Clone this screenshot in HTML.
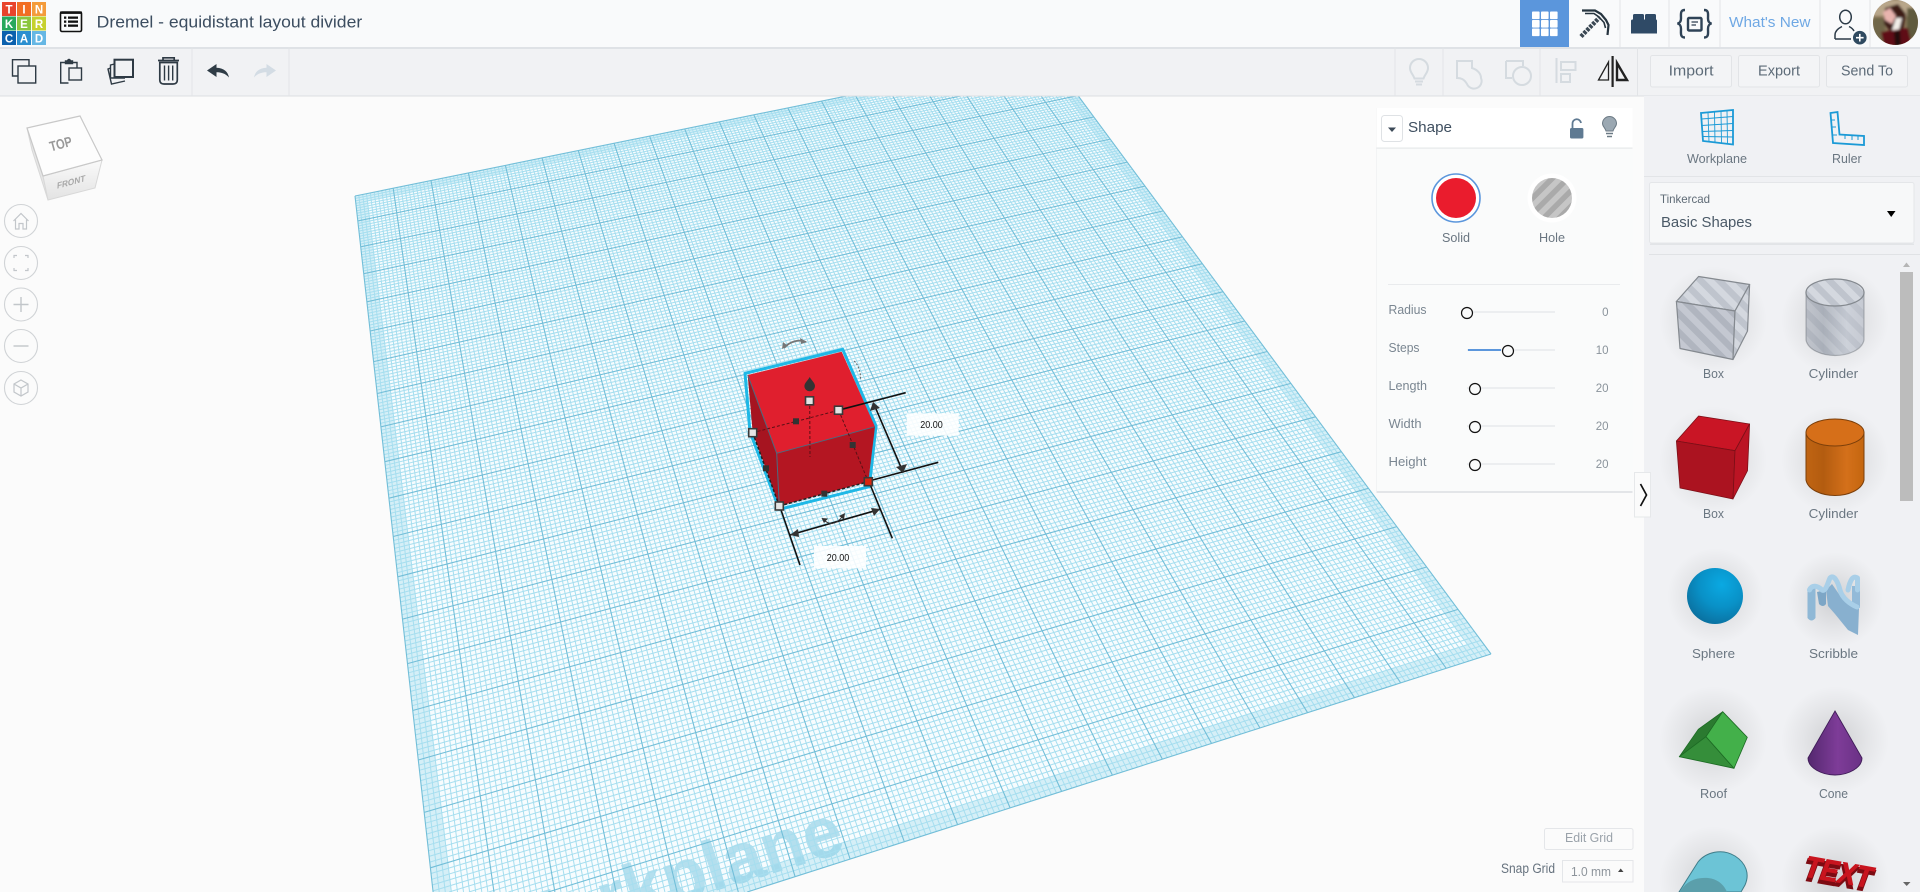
<!DOCTYPE html>
<html><head><meta charset="utf-8"><title>Dremel - equidistant layout divider</title>
<style>
html,body{margin:0;padding:0;background:#fbfbfb;overflow:hidden;width:1920px;height:892px}
svg{display:block;font-family:"Liberation Sans",sans-serif}
.lb{fill:#6a7681;font-size:13px}
.sl{fill:#7a8691;font-size:13px}
.val{fill:#8a939b;font-size:11.5px;text-anchor:end}
.btn{fill:#5d6b78;font-size:15px}
.ic{fill:none;stroke:#2e3a44;stroke-width:1.4}
.dis{fill:none;stroke:#d5dbe0;stroke-width:2}
.sep{stroke:#e2e4e7;stroke-width:1}
</style></head>
<body>
<svg xmlns="http://www.w3.org/2000/svg" width="1920" height="892" viewBox="0 0 1920 892">
<defs>
<pattern id="st" width="13" height="13" patternUnits="userSpaceOnUse" patternTransform="rotate(-45)"><rect width="13" height="13" fill="#c4c8d1"/><rect width="6.5" height="13" fill="#b0b5bf"/></pattern>
<pattern id="st2" width="13" height="13" patternUnits="userSpaceOnUse" patternTransform="rotate(-45)"><rect width="13" height="13" fill="#d4d8df"/><rect width="6.5" height="13" fill="#bfc4cd"/></pattern>
<pattern id="st3" width="11" height="11" patternUnits="userSpaceOnUse" patternTransform="rotate(45)"><rect width="11" height="11" fill="#c6c6c6"/><rect width="5.5" height="11" fill="#aaaaaa"/></pattern>
<linearGradient id="org" x1="0" x2="1" y1="0" y2="0"><stop offset="0" stop-color="#c06412"/><stop offset=".3" stop-color="#b35c10"/><stop offset=".7" stop-color="#d4701a"/><stop offset="1" stop-color="#c4660f"/></linearGradient>
<linearGradient id="gcyl" x1="0" x2="1" y1="0" y2="0"><stop offset="0" stop-color="#a9adb6"/><stop offset=".3" stop-color="#8f95a0"/><stop offset=".7" stop-color="#c6cbd4"/><stop offset="1" stop-color="#b6bac4"/></linearGradient>
<linearGradient id="pur" x1="0" x2="1" y1="0" y2="0"><stop offset="0" stop-color="#54286f"/><stop offset=".55" stop-color="#7e3c98"/><stop offset="1" stop-color="#6a3185"/></linearGradient>
<radialGradient id="sph" cx=".62" cy=".3" r=".8"><stop offset="0" stop-color="#0aa9e2"/><stop offset=".5" stop-color="#0991c7"/><stop offset="1" stop-color="#0a6a98"/></radialGradient>
<radialGradient id="glow"><stop offset="0" stop-color="#000" stop-opacity=".14"/><stop offset=".6" stop-color="#000" stop-opacity=".05"/><stop offset="1" stop-color="#000" stop-opacity="0"/></radialGradient>
<radialGradient id="glowB1" gradientUnits="userSpaceOnUse" cx="1713" cy="880" r="54"><stop offset="0" stop-color="#000" stop-opacity=".14"/><stop offset=".6" stop-color="#000" stop-opacity=".05"/><stop offset="1" stop-color="#000" stop-opacity="0"/></radialGradient>
<radialGradient id="glowB2" gradientUnits="userSpaceOnUse" cx="1835" cy="880" r="54"><stop offset="0" stop-color="#000" stop-opacity=".14"/><stop offset=".6" stop-color="#000" stop-opacity=".05"/><stop offset="1" stop-color="#000" stop-opacity="0"/></radialGradient>
<clipPath id="av"><circle cx="1895.5" cy="22.5" r="22.5"/></clipPath>
<filter id="bl"><feGaussianBlur stdDeviation="1.2"/></filter>
<linearGradient id="cubef" x1="0" x2="0" y1="0" y2="1"><stop offset="0" stop-color="#fafafa"/><stop offset="1" stop-color="#e3e3e3"/></linearGradient>
</defs>

<!-- workspace -->
<rect width="1920" height="892" fill="#fbfbfb"/>
<polygon points="355,196 1048,55 1491,654 747,892 433,892" fill="#f7fcfe"/>
<g transform="matrix(1,-0.30,0.33,1,848,851)"><text x="0" y="0" text-anchor="end" font-size="68" font-weight="700" fill="#b4dfee">Workplane</text></g>
<g id="grid"></g>

<!-- gizmo -->
<polygon points="745,373.3 842.7,349.3 876,426 869.3,486.7 779.3,509.3 750,432" fill="none" stroke="#1fb8e6" stroke-width="3" stroke-linejoin="round"/>
<polygon points="747.7,375 776.7,453.3 779.3,506 752.7,432.7" fill="#a61420"/>
<polygon points="747.7,375 841.7,351.7 875,426.7 776.7,453.3" fill="#e01f2e"/>
<polygon points="776.7,453.3 875,426.7 868.3,481.7 779.3,506" fill="#b41622"/>
<polyline points="747.7,375 776.7,453.3 875,426.7" fill="none" stroke="#4a6b80" stroke-width="1"/>
<line x1="776.7" y1="453.3" x2="779.3" y2="506" stroke="#4a6b80"/>
<g fill="none" stroke="#5a1016" stroke-width="1" stroke-dasharray="3 2">
<line x1="752.7" y1="432.7" x2="838.7" y2="410.3"/><line x1="809.7" y1="401" x2="810" y2="457"/><line x1="838.7" y1="410.3" x2="868.3" y2="481.7"/><line x1="779.3" y1="506" x2="868.3" y2="481.7" stroke="#222" stroke-width="1.5"/><line x1="752.7" y1="432.7" x2="779.3" y2="506" stroke="#222" stroke-width="1.5"/>
</g>
<g stroke="#111" stroke-width="1.6" fill="none">
<line x1="841.7" y1="409.3" x2="905.7" y2="392.7"/><line x1="872.7" y1="480" x2="938.3" y2="462.3"/>
<line x1="873.3" y1="402.7" x2="903.3" y2="472.7"/><line x1="781" y1="510" x2="800" y2="565"/><line x1="870.7" y1="486" x2="892.3" y2="538.3"/><line x1="790" y1="535" x2="880" y2="509.3"/>
</g>
<g fill="#333">
<polygon points="873,402 880,408 870,411"/><polygon points="903,473 896,467 907,464"/><polygon points="790,535 798,529 799,537"/><polygon points="880,509 871,508 874,516"/>
<rect x="793" y="418.3" width="6" height="6"/><rect x="849.7" y="442" width="6" height="6"/><rect x="821.3" y="490.7" width="6" height="6"/><rect x="763" y="465.3" width="6" height="6"/>
<path d="M809.7,377 C812,381 815,383 815,386 A5.3,5.3 0 0 1 804.4,386 C804.4,383 807.5,381 809.7,377Z"/>
<polygon points="821.5,518 828,518.5 824,523"/><polygon points="845,513 844,519.5 839,516"/>
</g>
<path d="M824,520 C829,525 836,525 842,517" fill="none" stroke="#333" stroke-width="1"/>
<path d="M784,348 C790,341 800,339 806,342" fill="none" stroke="#777" stroke-width="1.8"/>
<polygon points="782,349 783,342 788,346" fill="#777"/><polygon points="807,342 800,338 801,344" fill="#777"/>
<path d="M854,361 C858,364 861,372 860.5,380" fill="none" stroke="#666" stroke-width="1" stroke-dasharray="2 1.5"/>
<g fill="#e4e4e4" stroke="#3a3a3a" stroke-width="1.6">
<rect x="805.5" y="396.8" width="8" height="8"/><rect x="834.5" y="406.2" width="8" height="8"/><rect x="748.7" y="428.7" width="8" height="8"/><rect x="775.3" y="502" width="8" height="8"/>
<rect x="864.3" y="477.7" width="8" height="8" fill="#d8260f"/>
</g>
<rect x="906.7" y="413.3" width="52" height="22.4" fill="#fff" opacity=".88"/>
<text x="931.5" y="428" font-size="10" text-anchor="middle" fill="#111" textLength="22.5" lengthAdjust="spacingAndGlyphs">20.00</text>
<rect x="814" y="546" width="52" height="22.4" fill="#fff" opacity=".88"/>
<text x="838" y="561" font-size="10" text-anchor="middle" fill="#111" textLength="22.5" lengthAdjust="spacingAndGlyphs">20.00</text>

<!-- view cube -->
<polygon points="27,128 43,176 48,200 32,150" fill="#e6e6e6" stroke="#d8d8d8"/>
<polygon points="43,176 102,160 95,188 48,200" fill="url(#cubef)" stroke="#d8d8d8"/>
<polygon points="27,128 80,116 102,160 43,176" fill="#fdfdfd" stroke="#c8c8c8" stroke-width="1.2"/>
<text transform="translate(62,148.5) rotate(-15) scale(.8,1)" font-size="14" font-weight="700" fill="#999" text-anchor="middle">TOP</text>
<text transform="translate(71,185) rotate(-15) skewX(-18)" font-size="8.5" font-weight="700" fill="#a8a8a8" text-anchor="middle">FRONT</text>
<g fill="#fbfbfb" stroke="#d0d3d6" stroke-width="1.1">
<circle cx="21" cy="221" r="16.5"/><circle cx="21" cy="263" r="16.5"/><circle cx="21" cy="304.5" r="16.5"/><circle cx="21" cy="346" r="16.5"/><circle cx="21" cy="388" r="16.5"/>
</g>
<g fill="none" stroke="#c2c6ca" stroke-width="1.2">
<path d="M13.5,221 L21,213.5 L28.5,221 M15.5,219.5 V229 H19 V223.5 H23 V229 H26.5 V219.5"/>
<path d="M14,258 V255.5 H17 M25,255.5 H28 V258 M28,268 V270.5 H25 M17,270.5 H14 V268"/>
<path d="M21,297 V312 M13.5,304.5 H28.5" stroke-width="1.4"/>
<path d="M13.5,346 H28.5" stroke-width="1.4"/>
<path d="M21,380 L28,384 V392 L21,396 L14,392 V384 Z M14,384 L21,388 L28,384 M21,388 V396"/>
</g>

<!-- top bar -->
<rect y="47" width="1920" height="49" fill="#f1f2f4"/>
<rect y="95.5" width="1920" height="1" fill="#dcdfe2"/>
<rect y="47" width="1920" height="2" fill="#dfe2e6"/>
<rect width="1920" height="47" fill="#f9fafb"/>
<g font-weight="700" font-size="11.5" fill="#fff" text-anchor="middle">
<rect x="2" y="2" width="14" height="14" fill="#e8432b"/><text x="9" y="13.5">T</text>
<rect x="17" y="2" width="14" height="14" fill="#f26e23"/><text x="24" y="13.5">I</text>
<rect x="32" y="2" width="14" height="14" fill="#f49b3b"/><text x="39" y="13.5">N</text>
<rect x="2" y="16.5" width="14" height="14" fill="#27a85d"/><text x="9" y="28">K</text>
<rect x="17" y="16.5" width="14" height="14" fill="#8cc63f"/><text x="24" y="28">E</text>
<rect x="32" y="16.5" width="14" height="14" fill="#c6d12f"/><text x="39" y="28">R</text>
<rect x="2" y="31" width="14" height="14" fill="#0b61ae"/><text x="9" y="42.5">C</text>
<rect x="17" y="31" width="14" height="14" fill="#2b8fd0"/><text x="24" y="42.5">A</text>
<rect x="32" y="31" width="14" height="14" fill="#66b7e4"/><text x="39" y="42.5">D</text>
</g>
<rect x="60.5" y="12" width="21" height="19.5" rx="1.5" fill="none" stroke="#111" stroke-width="1.6"/>
<rect x="60" y="11.5" width="22" height="2.4" fill="#111"/>
<g fill="#111"><rect x="64" y="16.5" width="2.3" height="2.3"/><rect x="64" y="20.5" width="2.3" height="2.3"/><rect x="64" y="24.5" width="2.3" height="2.3"/><rect x="68" y="16.5" width="10" height="2.3"/><rect x="68" y="20.5" width="10" height="2.3"/><rect x="68" y="24.5" width="10" height="2.3"/></g>
<text x="96.7" y="27.5" font-size="16.5" fill="#3c4d60" textLength="265.5" lengthAdjust="spacingAndGlyphs">Dremel - equidistant layout divider</text>

<rect x="1520" y="0" width="49" height="47" fill="#5b96dc"/>
<g fill="#fff"><rect x="1532" y="11.5" width="7.6" height="7.6" rx=".8"/><rect x="1541" y="11.5" width="7.6" height="7.6" rx=".8"/><rect x="1550" y="11.5" width="7.6" height="7.6" rx=".8"/><rect x="1532" y="20" width="7.6" height="7.6" rx=".8"/><rect x="1541" y="20" width="7.6" height="7.6" rx=".8"/><rect x="1550" y="20" width="7.6" height="7.6" rx=".8"/><rect x="1532" y="28.5" width="7.6" height="7.6" rx=".8"/><rect x="1541" y="28.5" width="7.6" height="7.6" rx=".8"/><rect x="1550" y="28.5" width="7.6" height="7.6" rx=".8"/></g>
<!-- pickaxe -->
<path d="M1582,10.5 H1595 L1601,14 L1606,20 L1608.5,25 L1607.5,35" fill="none" stroke="#26343f" stroke-width="2.2"/>
<path d="M1585,13.5 H1594 L1599,17 L1604,22.5 L1605.5,28" fill="none" stroke="#26343f" stroke-width="1.6"/>
<path d="M1581,36.5 L1599,18" fill="none" stroke="#3b4854" stroke-width="4.4" stroke-dasharray="3 1.2"/>
<line x1="1620" y1="0" x2="1620" y2="47" class="sep"/><line x1="1669" y1="0" x2="1669" y2="47" class="sep"/><line x1="1720" y1="0" x2="1720" y2="47" class="sep"/><line x1="1820" y1="0" x2="1820" y2="47" class="sep"/><line x1="1870" y1="0" x2="1870" y2="47" class="sep"/>
<path d="M1631,21 Q1631,19.5 1632.5,19.5 H1633 V15.5 Q1633,14 1634.5,14 H1642.5 Q1644,14 1644,15.5 V19.5 H1645 V15.5 Q1645,14 1646.5,14 H1654.5 Q1656,14 1656,15.5 V19.5 Q1657,19.5 1657,21 V33.5 H1631Z" fill="#2f4a66"/>
<g fill="none" stroke="#2f4357" stroke-width="2.4"><path d="M1685,10 C1680,10 1681,14 1681,18.5 C1681,22 1679.5,23 1677.5,23.5 C1679.5,24 1681,25 1681,29 C1681,33 1680,37.5 1685,37.5"/><path d="M1704,10 C1709,10 1708,14 1708,18.5 C1708,22 1709.5,23 1711.5,23.5 C1709.5,24 1708,25 1708,29 C1708,33 1709,37.5 1704,37.5"/><rect x="1688" y="18" width="13.5" height="12.5" rx="1"/></g>
<path d="M1691.5,22 H1698 M1691.5,25 H1696" stroke="#2f3f4f" stroke-width="1.2" fill="none"/>
<text x="1729" y="27" font-size="15" fill="#6fa8e4" textLength="81.5" lengthAdjust="spacingAndGlyphs">What's New</text>
<g fill="none" stroke="#2c3b48" stroke-width="1.5"><ellipse cx="1845.5" cy="17" rx="5.8" ry="6.8"/><path d="M1835,39 V35 C1835,30 1840,27.5 1842,26.5 M1849,26.5 C1851,27.5 1853,29 1854,31 M1835,39 H1851"/></g>
<circle cx="1859.8" cy="37.7" r="6.8" fill="#2f4a60"/><path d="M1856,37.7 H1863.6 M1859.8,33.9 V41.5" stroke="#fff" stroke-width="1.6"/>
<g clip-path="url(#av)">
<rect x="1873" y="0" width="45" height="45" fill="#8a7658"/>
<g filter="url(#bl)">
<rect x="1873" y="0" width="45" height="16" fill="#b8a68a"/>
<rect x="1873" y="18" width="12" height="27" fill="#70664a"/>
<rect x="1907" y="8" width="12" height="30" fill="#5e5a3e"/>
<path d="M1885,8 L1898,4 L1906,14 L1903,30 L1893,34 L1884,24Z" fill="#3d1a18"/>
<path d="M1883,12 L1890,8 L1896,16 L1892,24 L1885,20Z" fill="#e8b4ae"/>
<path d="M1896,18 L1902,18 L1898,34 L1892,30Z" fill="#f2eee8"/>
<path d="M1881,32 L1908,28 L1912,46 L1884,46Z" fill="#5e0f16"/>
<path d="M1894,32 L1900,30 L1901,46 L1895,46Z" fill="#240c0e"/>
</g></g>

<!-- toolbar icons -->
<g class="ic">
<path d="M18,76 H12.5 V59.7 H29 V66"/><rect x="18" y="66" width="17.7" height="17" fill="#f1f2f4"/>
<path d="M65,62.5 H60.7 V83 H68.5 M72.5,62.5 H77 V68"/><path d="M65.5,63.5 V61 H67.5 A1.5,1.5 0 0 1 70.5,61 H72.5 V63.5Z" fill="#2e3a44" stroke="#2e3a44"/><rect x="69" y="68" width="12.5" height="12" fill="#f1f2f4"/>
<rect x="114.5" y="59.7" width="18.5" height="17.3" stroke-width="2"/><path d="M114.5,64 L110.5,65 V78 L125,78 M110.5,68 L108,69 L111.5,84 L125,81" />
<path d="M159.8,62.5 H177.3 V80 Q177.3,84 173,84 H164 Q159.8,84 159.8,80Z" stroke-width="1.7"/><path d="M158,60.5 H179 M163,60 V57.8 H174.2 V60" stroke-width="1.7"/><path d="M164.5,65.5 V80.5 M168.6,65.5 V80.5 M172.7,65.5 V80.5"/>
</g>
<path d="M207,70.5 L216.5,64 V67.8 C224,68 228,72 229,77.5 C225.5,73.5 221,72.3 216.5,72.3 V77Z" fill="#2f3c46"/>
<path d="M276,70.5 L266.5,64 V67.8 C259,68 255,72 254,77.5 C257.5,73.5 262,72.3 266.5,72.3 V77Z" fill="#d3dce4"/>
<line x1="192" y1="47" x2="192" y2="96" class="sep"/><line x1="289" y1="47" x2="289" y2="96" class="sep"/>
<line x1="1395" y1="47" x2="1395" y2="96" class="sep"/><line x1="1443" y1="47" x2="1443" y2="96" class="sep"/><line x1="1540" y1="47" x2="1540" y2="96" class="sep"/><line x1="1637.5" y1="47" x2="1637.5" y2="96" class="sep"/>
<g class="dis">
<path d="M1414.5,78.5 C1413,74 1410,72.5 1410,68 A9,9 0 0 1 1428,68 C1428,72.5 1425,74 1423.5,78.5Z M1415,81.5 H1423 M1416,84.5 H1422"/>
<path d="M1457,61 H1472 V68 C1478,70 1481,74 1481,78 A7,7 0 0 1 1467,84 C1464,79 1461,78 1457,78Z"/>
<path d="M1506,61 H1523 V66 M1506,61 V78 H1512"/><circle cx="1522" cy="76" r="9"/>
<path d="M1556.5,58 V83 M1561,62 H1575.5 V70 H1561Z M1561,74 H1570 V82 H1561Z"/>
</g>
<line x1="1612.6" y1="56" x2="1612.6" y2="87" stroke="#222" stroke-width="2.2"/>
<polygon points="1598.5,80 1608.5,62 1608.5,80" fill="none" stroke="#222" stroke-width="1.3"/>
<polygon points="1617,63 1627,80 1617,80" fill="none" stroke="#222" stroke-width="2.4"/>
<g fill="#f3f4f6" stroke="#e2e4e7"><rect x="1650.5" y="55.5" width="81" height="31.5" rx="2"/><rect x="1738.5" y="55.5" width="81" height="31.5" rx="2"/><rect x="1826.5" y="55.5" width="81" height="31.5" rx="2"/></g>
<text class="btn" x="1668.6" y="75.5" textLength="45" lengthAdjust="spacingAndGlyphs">Import</text>
<text class="btn" x="1758" y="75.5" textLength="42" lengthAdjust="spacingAndGlyphs">Export</text>
<text class="btn" x="1841" y="75.5" textLength="52" lengthAdjust="spacingAndGlyphs">Send To</text>

<!-- shape panel -->
<rect x="1376.5" y="108" width="256" height="383" fill="#fafbfb"/>
<rect x="1376.5" y="491" width="256" height="2" fill="#e3e5e8"/>
<rect x="1376" y="108" width="0.8" height="383" fill="#f0f1f2"/>
<rect x="1376.5" y="108" width="256" height="40" fill="#fff"/>
<rect x="1376.5" y="147.5" width="256" height="1.2" fill="#e6e8ea"/>
<rect x="1381.5" y="115.5" width="21" height="26" rx="3" fill="#fff" stroke="#dfe2e5"/>
<polygon points="1388,127.5 1396,127.5 1392,132" fill="#3c4a58"/>
<text x="1408" y="132" font-size="15" fill="#3f4f60" textLength="44" lengthAdjust="spacingAndGlyphs">Shape</text>
<rect x="1570" y="128" width="13.4" height="10.5" rx="1.5" fill="#5f7a92"/>
<path d="M1572.5,128 V124 A4,4 0 0 1 1581,123" fill="none" stroke="#5f7a92" stroke-width="1.8"/>
<path d="M1606,131 C1605,127.5 1602.5,126.5 1602.5,123.5 A7,7 0 0 1 1616.5,123.5 C1616.5,126.5 1614,127.5 1613,131Z" fill="#9ba8b2" stroke="#6c7a85" stroke-width="1"/>
<path d="M1606,133.5 H1613 M1607,136.5 H1612" stroke="#6c7a85" stroke-width="1.5"/>
<circle cx="1456" cy="198" r="24" fill="#fff" stroke="#5b96dc" stroke-width="1.6"/>
<circle cx="1456" cy="198" r="20" fill="#ea1c2d"/>
<circle cx="1552" cy="198" r="24.5" fill="#fff"/>
<circle cx="1552" cy="198" r="20" fill="url(#st3)"/>
<text class="lb" x="1442" y="242" textLength="28" lengthAdjust="spacingAndGlyphs">Solid</text>
<text class="lb" x="1539" y="242" textLength="26" lengthAdjust="spacingAndGlyphs">Hole</text>
<rect x="1388" y="284" width="232" height="1" fill="#e9ebed"/>
<g>
<text class="sl" x="1388.5" y="314" textLength="38" lengthAdjust="spacingAndGlyphs">Radius</text>
<text class="sl" x="1388.5" y="352" textLength="31" lengthAdjust="spacingAndGlyphs">Steps</text>
<text class="sl" x="1388.5" y="390" textLength="38.5" lengthAdjust="spacingAndGlyphs">Length</text>
<text class="sl" x="1388.5" y="428" textLength="33" lengthAdjust="spacingAndGlyphs">Width</text>
<text class="sl" x="1388.5" y="466" textLength="38" lengthAdjust="spacingAndGlyphs">Height</text>
<g fill="#eceef0"><rect x="1467" y="311" width="88" height="2"/><rect x="1467" y="349" width="88" height="2"/><rect x="1467" y="387" width="88" height="2"/><rect x="1467" y="425" width="88" height="2"/><rect x="1467" y="463" width="88" height="2"/></g>
<rect x="1468" y="349" width="33" height="2" fill="#5b96dc"/>
<g fill="#fafbfb" stroke="#111" stroke-width="1.2"><circle cx="1467" cy="313" r="5.5"/><circle cx="1508" cy="351" r="5.5"/><circle cx="1475" cy="389" r="5.5"/><circle cx="1475" cy="427" r="5.5"/><circle cx="1475" cy="465" r="5.5"/></g>
<text class="val" x="1608.5" y="316">0</text><text class="val" x="1608.5" y="354">10</text><text class="val" x="1608.5" y="392">20</text><text class="val" x="1608.5" y="430">20</text><text class="val" x="1608.5" y="468">20</text>
</g>

<!-- right panel -->
<rect x="1644" y="96" width="276" height="796" fill="#f0f1f4"/>
<rect x="1634.5" y="472.5" width="16" height="44.5" fill="#fbfbfb" stroke="#e6e8ea"/>
<path d="M1640.5,484 L1646.5,495 L1640.5,506" fill="none" stroke="#111" stroke-width="1.7"/>
<rect x="1644" y="176" width="276" height="1" fill="#e2e4e7"/>
<g fill="none" stroke="#1b9ad6">
<polygon points="1701,113 1733,110 1733,144.5 1703,141" stroke-width="1.8"/>
<path d="M1708,112.5 L1709,142 M1714.5,112 L1715,142.5 M1721,111.3 L1721.5,143 M1727,110.8 L1727.5,143.8 M1701.5,119 L1733,116.5 M1701.8,125.5 L1733,123.5 M1702,131.5 L1733,130.5 M1702.5,136.5 L1733,137" stroke-width=".9"/>
<path d="M1830.5,113 L1837.5,112 L1839.5,134.5 L1864,136 V145 L1833,143Z" stroke-width="1.8"/>
<path d="M1831,120 H1835 M1832,127 H1836 M1833,135 H1837 M1845,139 V135 M1852,140 V136 M1858,140 V136" stroke-width="1"/>
</g>
<text class="lb" x="1687" y="163" textLength="60" lengthAdjust="spacingAndGlyphs">Workplane</text>
<text class="lb" x="1832" y="163" textLength="29.6" lengthAdjust="spacingAndGlyphs">Ruler</text>
<rect x="1649.5" y="182.5" width="264.5" height="60.5" rx="2" fill="#f7f8f9" stroke="#e4e6e9"/>
<rect x="1650" y="243.5" width="264" height="1.5" fill="#e2e4e7"/>
<text x="1660" y="203" font-size="12" fill="#5f6b76" textLength="50" lengthAdjust="spacingAndGlyphs">Tinkercad</text>
<text x="1661" y="227" font-size="15" fill="#4a5967" textLength="91" lengthAdjust="spacingAndGlyphs">Basic Shapes</text>
<polygon points="1887,211 1895.5,211 1891.2,217" fill="#000"/>
<rect x="1649" y="254" width="271" height="1" fill="#e0e2e5"/>
<polygon points="1903,267 1910,267 1906.5,262.5" fill="#b5b5b5"/>
<rect x="1900" y="272" width="13" height="229" fill="#bcbcbc"/>
<polygon points="1903,882 1910.5,882 1906.7,886" fill="#666"/>

<g fill="url(#glow)"><circle cx="1713" cy="320" r="54"/><circle cx="1835" cy="320" r="54"/><circle cx="1713" cy="460" r="54"/><circle cx="1835" cy="460" r="54"/><circle cx="1715" cy="596" r="48"/><circle cx="1835" cy="600" r="48"/><circle cx="1713" cy="740" r="54"/><circle cx="1835" cy="740" r="54"/></g>
<rect x="1659" y="826" width="108" height="66" fill="url(#glowB1)"/><rect x="1781" y="826" width="108" height="66" fill="url(#glowB2)"/>

<!-- gray box -->
<g stroke="#84898f" stroke-width="1.2" stroke-linejoin="round">
<polygon points="1698.6,276.5 1749.6,284.5 1735,311 1676.4,301.5" fill="url(#st2)"/>
<polygon points="1676.4,301.5 1735,311 1733,359.5 1680,348.5" fill="url(#st)"/>
<polygon points="1735,311 1749.6,284.5 1747.5,331 1733,359.5" fill="url(#st2)"/>
</g>
<text class="lb" x="1703" y="378" textLength="21" lengthAdjust="spacingAndGlyphs">Box</text>
<!-- gray cyl -->
<path d="M1806,292.5 V340 C1808,350 1822,355.5 1835,355.5 C1848,355.5 1862,350 1864,340 V292.5Z" fill="url(#gcyl)"/>
<path d="M1806,292.5 V340 C1808,350 1822,355.5 1835,355.5 C1848,355.5 1862,350 1864,340 V292.5Z" fill="url(#st2)" opacity=".55" stroke="#84898f" stroke-width="1.2"/>
<ellipse cx="1835" cy="292.5" rx="29" ry="13.5" fill="url(#st2)" stroke="#84898f" stroke-width="1.2"/>
<text class="lb" x="1808.6" y="378" textLength="49.5" lengthAdjust="spacingAndGlyphs">Cylinder</text>
<!-- red box -->
<g stroke="#7c0f17" stroke-width=".8" stroke-linejoin="round">
<polygon points="1698.6,416 1749.6,424 1735,450.7 1676.4,441" fill="#c91525"/>
<polygon points="1676.4,441 1735,450.7 1733,499 1680,488" fill="#ab1320"/>
<polygon points="1735,450.7 1749.6,424 1747.5,470.7 1733,499" fill="#bb1424"/>
</g>
<text class="lb" x="1703" y="518" textLength="21" lengthAdjust="spacingAndGlyphs">Box</text>
<!-- orange cyl -->
<path d="M1806,432.5 V480 C1808,490 1822,495.5 1835,495.5 C1848,495.5 1862,490 1864,480 V432.5Z" fill="url(#org)" stroke="#7c3f0a" stroke-width="1"/>
<ellipse cx="1835" cy="432.5" rx="29" ry="13.5" fill="#d66f19" stroke="#7c3f0a" stroke-width="1"/>
<text class="lb" x="1808.6" y="518" textLength="49.5" lengthAdjust="spacingAndGlyphs">Cylinder</text>
<!-- sphere -->
<circle cx="1715" cy="596" r="28" fill="url(#sph)"/>
<text class="lb" x="1692" y="658" textLength="43" lengthAdjust="spacingAndGlyphs">Sphere</text>
<!-- scribble -->
<path d="M1807.5,588 H1815.5 V618 Q1811.5,623 1807.5,618Z" fill="#8fb8d6"/>
<polygon points="1826,590 1832,584 1843,600 1859,608 1858,635 1848,630 1835,614 1828,606" fill="#88b0cf"/>
<path d="M1817,592 L1819,604 Q1823,608 1826,604 L1826,590Z" fill="#7da6c6"/>
<path d="M1852,586 H1860 V608 L1852,604Z" fill="#93bad8"/>
<g fill="none" stroke="#a9cfe8" stroke-width="5" stroke-linecap="round" stroke-linejoin="round">
<path d="M1809.5,590 C1812,584 1818,586 1822,590 C1826,592 1828,582 1830,578 C1834,574 1838,582 1840,590 C1842,598 1850,604 1857,607"/>
<path d="M1848,590 C1850,580 1853,575 1857.5,578 V590"/>
</g>
<text class="lb" x="1809" y="658" textLength="49" lengthAdjust="spacingAndGlyphs">Scribble</text>
<!-- roof -->
<g stroke="#1d6b24" stroke-width=".8" stroke-linejoin="round">
<polygon points="1679.3,756.7 1698.3,729.3 1722.7,711.7 1706,736.7" fill="#2b7a30"/>
<polygon points="1679.3,756.7 1706,736.7 1734,768.3" fill="#358e3a"/>
<polygon points="1722.7,711.7 1747.3,737.3 1734,768.3 1706,736.7" fill="#43b04a"/>
</g>
<text class="lb" x="1700" y="798" textLength="27" lengthAdjust="spacingAndGlyphs">Roof</text>
<!-- cone -->
<path d="M1835,711 L1862,758 C1862,768 1848,775 1835,775 C1822,775 1808,768 1808,758Z" fill="url(#pur)" stroke="#3f1c58" stroke-width=".9"/>
<text class="lb" x="1819" y="798" textLength="29" lengthAdjust="spacingAndGlyphs">Cone</text>
<!-- teal -->
<path d="M1679,892 L1698,862 C1706,852 1722,848 1735,856 C1746,863 1750,874 1745,885 L1741,892Z" fill="#6cc4d6" stroke="#3f7d8a" stroke-width="1"/>
<path d="M1680,892 C1685,882 1695,877 1708,878 C1718,879 1724,885 1727,892Z" fill="#5b9fab"/>
<!-- text -->
<text transform="translate(1801,879) rotate(10) skewX(-10)" font-size="30" font-weight="700" fill="#7d0b12" stroke="#7d0b12" stroke-width="2.6" textLength="68" lengthAdjust="spacingAndGlyphs">TEXT</text>
<text transform="translate(1802,876) rotate(10) skewX(-10)" font-size="30" font-weight="700" fill="#c8141e" stroke="#c8141e" stroke-width=".8" textLength="68" lengthAdjust="spacingAndGlyphs">TEXT</text>

<!-- grid controls -->
<rect x="1544.5" y="828.5" width="88.5" height="21" rx="2" fill="#fbfbfb" stroke="#e4e6e9"/>
<text x="1565" y="842" font-size="13" fill="#9aa2aa" textLength="48" lengthAdjust="spacingAndGlyphs">Edit Grid</text>
<text x="1501" y="873" font-size="13.5" fill="#66727e" textLength="54" lengthAdjust="spacingAndGlyphs">Snap Grid</text>
<rect x="1562.5" y="860.5" width="70.5" height="21.5" fill="#fbfbfb" stroke="#e4e6e9"/>
<text x="1571" y="876" font-size="13" fill="#8d949b" textLength="40" lengthAdjust="spacingAndGlyphs">1.0 mm</text>
<polygon points="1618,872 1623.5,872 1620.7,868.5" fill="#444"/>
</svg>
<script>
(function(){
var NS="http://www.w3.org/2000/svg",g0=document.getElementById("grid"),YM=892;
var x0=355,y0=196,x1=1048,y1=55,x2=1491,y2=654,x3=444,y3=989;
var dx1=x1-x2,dy1=y1-y2,dx2=x3-x2,dy2=y3-y2,sx=x0-x1+x2-x3,sy=y0-y1+y2-y3;
var det=dx1*dy2-dx2*dy1,g=(sx*dy2-dx2*sy)/det,h=(dx1*sy-sx*dy1)/det;
var a=x1-x0+g*x1,b=x3-x0+h*x3,d=y1-y0+g*y1,e=y3-y0+h*y3;
function P(u,v){var w=1+g*u+h*v;return [(a*u+b*v+x0)/w,(d*u+e*v+y0)/w];}
function cut(p,q){var t=(YM-p[1])/(q[1]-p[1]);return [p[0]+t*(q[0]-p[0]),YM];}
function poly(u1,v1,u2,v2,f){
 var s=[P(u1,v1),P(u2,v1),P(u2,v2),P(u1,v2)],o=[],i,p,q;
 for(i=0;i<4;i++){p=s[i];q=s[(i+1)%4];
  if(p[1]<=YM){o.push(p);if(q[1]>YM)o.push(cut(p,q));}
  else if(q[1]<=YM)o.push(cut(p,q));}
 if(!o.length)return;
 var el=document.createElementNS(NS,"polygon");
 el.setAttribute("points",o.map(function(r){return r[0].toFixed(1)+","+r[1].toFixed(1)}).join(" "));
 el.setAttribute("fill",f);g0.appendChild(el);}
function line(u1,v1,u2,v2,c,w){var l=document.createElementNS(NS,"line"),p=P(u1,v1),q=P(u2,v2);
 if(p[1]>YM&&q[1]>YM)return;
 if(q[1]>YM)q=cut(p,q);else if(p[1]>YM)p=cut(p,q);
 l.setAttribute("x1",p[0].toFixed(1));l.setAttribute("y1",p[1].toFixed(1));l.setAttribute("x2",q[0].toFixed(1));l.setAttribute("y2",q[1].toFixed(1));
 l.setAttribute("stroke",c);l.setAttribute("stroke-width",w);g0.appendChild(l);}
var i,t,B=0.015,F="rgba(110,200,228,.25)";
poly(0,0,B,1,F);poly(1-B,0,1,1,F);poly(B,0,1-B,B,F);poly(B,1-B,1-B,1,F);
for(i=0;i<=200;i++){if(i%10){t=i/200;line(t,0,t,1,"#a6deef",1);line(0,t,1,t,"#a6deef",1);}}
for(i=0;i<=200;i+=10){t=i/200;line(t,0,t,1,"#72bed8",1.1);line(0,t,1,t,"#72bed8",1.1);}
})();
</script>
</body></html>
